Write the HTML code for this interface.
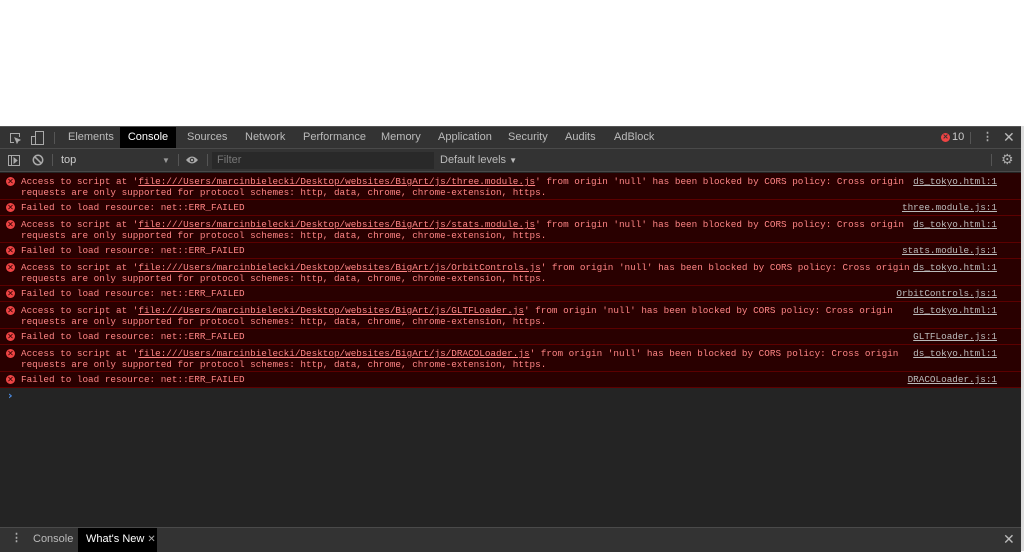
<!DOCTYPE html>
<html><head><style>
*{margin:0;padding:0;box-sizing:border-box}
body{width:1024px;height:551px;background:#fff;position:relative;overflow:hidden;font-family:"Liberation Sans",sans-serif}
#dt{position:absolute;left:0;top:126px;width:1021px;height:425px;background:#242424;border-top:1px solid #555}
#edge{position:absolute;left:1021px;top:126px;width:3px;height:425px;background:#ddd}
.tb{position:absolute;left:0;width:1021px;background:#333;color:#ccc;font-size:11px}
#t1{top:0;height:22px;border-bottom:1px solid #4a4a4a}
#t2{top:22px;height:23px;border-bottom:1px solid #4a4a4a}
.tab{position:absolute;top:0;height:21px;line-height:21px;color:#bbb}
.msgs{position:absolute;top:46px;left:0;width:1021px;font-family:"Liberation Mono",monospace;font-size:9.32px;color:#ff8585}
.m{position:relative;background:#290000;border-bottom:1px solid #5c0000;padding:3px 0 0 21px;line-height:11px}
.m.d{height:27px}.m.s{height:16px;padding-top:2px}
.m i{position:absolute;left:6px;top:4px;width:9px;height:9px;border-radius:50%;background:#e44;color:#290000;font-style:normal;font-size:8px;line-height:9px;text-align:center;font-family:"DejaVu Sans",sans-serif;font-weight:bold}
.m.s i{top:3px}
.u{text-decoration:underline}
.src{position:absolute;right:24px;top:3px;color:#bbb;text-decoration:underline}
.m.s .src{top:2px}
#bot{position:absolute;left:0;top:400px;width:1021px;height:25px;background:#333;border-top:1px solid #4a4a4a;font-size:11px;color:#bbb}
</style></head><body>
<div id="dt">
<div class="tb" id="t1">
<svg style="position:absolute;left:9px;top:5px" width="12" height="12" viewBox="0 0 12 12" fill="none" stroke="#aaa"><path d="M5 10.5H1.5V1.5H10.5V5"/><path d="M6 6l5 2-2 1-1 2z" fill="#aaa"/></svg>
<svg style="position:absolute;left:31px;top:4px" width="13" height="14" viewBox="0 0 13 14" fill="none" stroke="#aaa"><rect x="4.5" y="0.5" width="8" height="13"/><rect x="0.5" y="5.5" width="4" height="8"/></svg>
<div style="position:absolute;left:54px;top:5px;width:1px;height:12px;background:#555"></div>
<span class="tab" style="left:68px">Elements</span>
<span class="tab" style="left:120px;width:56px;background:#000;color:#fff;text-align:center">Console</span>
<span class="tab" style="left:187px">Sources</span>
<span class="tab" style="left:245px">Network</span>
<span class="tab" style="left:303px">Performance</span>
<span class="tab" style="left:381px">Memory</span>
<span class="tab" style="left:438px">Application</span>
<span class="tab" style="left:508px">Security</span>
<span class="tab" style="left:565px">Audits</span>
<span class="tab" style="left:614px">AdBlock</span>
<span style="position:absolute;left:941px;top:6px;width:9px;height:9px;border-radius:50%;background:#e44;color:#333;font-size:7px;line-height:9px;text-align:center;font-weight:bold">✕</span>
<span class="tab" style="left:952px;color:#ccc">10</span>
<div style="position:absolute;left:970px;top:5px;width:1px;height:12px;background:#555"></div>
<span class="tab" style="left:982px;font-weight:bold;color:#aaa">⋮</span>
<span class="tab" style="left:1003px;font-size:14px;color:#bbb">✕</span>
</div>
<div class="tb" id="t2">
<svg style="position:absolute;left:8px;top:6px" width="12" height="11" viewBox="0 0 12 11" fill="none" stroke="#aaa"><rect x="0.5" y="0.5" width="11" height="10"/><path d="M3.5 1v9"/><path d="M6 3l3 2.5-3 2.5z" fill="#aaa"/></svg>
<svg style="position:absolute;left:32px;top:5px" width="12" height="12" viewBox="0 0 12 12" fill="none" stroke="#aaa" stroke-width="1.5"><circle cx="6" cy="6" r="4.7"/><path d="M2.8 2.8l6.4 6.4"/></svg>
<div style="position:absolute;left:52px;top:5px;width:1px;height:12px;background:#555"></div>
<span class="tab" style="left:61px;top:1px;color:#ccc">top</span>
<span class="tab" style="left:162px;top:1px;font-size:8px;color:#999">▼</span>
<div style="position:absolute;left:178px;top:5px;width:1px;height:12px;background:#555"></div>
<svg style="position:absolute;left:185px;top:6px" width="14" height="10" viewBox="0 0 14 10"><path d="M1 5Q7-2 13 5Q7 12 1 5z" fill="#aaa"/><circle cx="7" cy="5" r="2.3" fill="#333"/><circle cx="7" cy="5" r="1.2" fill="#aaa"/></svg>
<div style="position:absolute;left:207px;top:5px;width:1px;height:12px;background:#555"></div>
<div style="position:absolute;left:212px;top:3px;width:222px;height:17px;background:#292929;color:#777;padding-left:5px;line-height:17px">Filter</div>
<span class="tab" style="left:440px;top:1px;color:#bbb">Default levels <span style="font-size:8px">▼</span></span>
<div style="position:absolute;left:991px;top:5px;width:1px;height:12px;background:#555"></div>
<span class="tab" style="left:1001px;top:0;font-size:14px;color:#aaa">⚙</span>
</div>
<div class="msgs">
<div class="m d"><i>✕</i>Access to script at '<span class="u">file:///Users/marcinbielecki/Desktop/websites/BigArt/js/three.module.js</span>' from origin 'null' has been blocked by CORS policy: Cross origin<br>requests are only supported for protocol schemes: http, data, chrome, chrome-extension, https.<span class="src">ds_tokyo.html:1</span></div>
<div class="m s"><i>✕</i>Failed to load resource: net::ERR_FAILED<span class="src">three.module.js:1</span></div>
<div class="m d"><i>✕</i>Access to script at '<span class="u">file:///Users/marcinbielecki/Desktop/websites/BigArt/js/stats.module.js</span>' from origin 'null' has been blocked by CORS policy: Cross origin<br>requests are only supported for protocol schemes: http, data, chrome, chrome-extension, https.<span class="src">ds_tokyo.html:1</span></div>
<div class="m s"><i>✕</i>Failed to load resource: net::ERR_FAILED<span class="src">stats.module.js:1</span></div>
<div class="m d"><i>✕</i>Access to script at '<span class="u">file:///Users/marcinbielecki/Desktop/websites/BigArt/js/OrbitControls.js</span>' from origin 'null' has been blocked by CORS policy: Cross origin<br>requests are only supported for protocol schemes: http, data, chrome, chrome-extension, https.<span class="src">ds_tokyo.html:1</span></div>
<div class="m s"><i>✕</i>Failed to load resource: net::ERR_FAILED<span class="src">OrbitControls.js:1</span></div>
<div class="m d"><i>✕</i>Access to script at '<span class="u">file:///Users/marcinbielecki/Desktop/websites/BigArt/js/GLTFLoader.js</span>' from origin 'null' has been blocked by CORS policy: Cross origin<br>requests are only supported for protocol schemes: http, data, chrome, chrome-extension, https.<span class="src">ds_tokyo.html:1</span></div>
<div class="m s"><i>✕</i>Failed to load resource: net::ERR_FAILED<span class="src">GLTFLoader.js:1</span></div>
<div class="m d"><i>✕</i>Access to script at '<span class="u">file:///Users/marcinbielecki/Desktop/websites/BigArt/js/DRACOLoader.js</span>' from origin 'null' has been blocked by CORS policy: Cross origin<br>requests are only supported for protocol schemes: http, data, chrome, chrome-extension, https.<span class="src">ds_tokyo.html:1</span></div>
<div class="m s"><i>✕</i>Failed to load resource: net::ERR_FAILED<span class="src">DRACOLoader.js:1</span></div>
<div style="padding:1px 0 0 8px;color:#4d8fe8;font-size:11px;font-weight:bold;font-family:'DejaVu Sans',sans-serif">›</div>
</div>
<div id="bot">
<span style="position:absolute;left:11px;top:3px;font-weight:bold;color:#aaa">⋮</span>
<span style="position:absolute;left:33px;top:5px">Console</span>
<span style="position:absolute;left:78px;top:0;height:24px;width:79px;background:#000;color:#fff;line-height:23px;padding-left:8px">What's New <span style="color:#aaa;font-size:10px">✕</span></span>
<span style="position:absolute;left:1003px;top:3px;font-size:14px;color:#bbb">✕</span>
</div>
</div>
<div id="edge"></div>
</body></html>
